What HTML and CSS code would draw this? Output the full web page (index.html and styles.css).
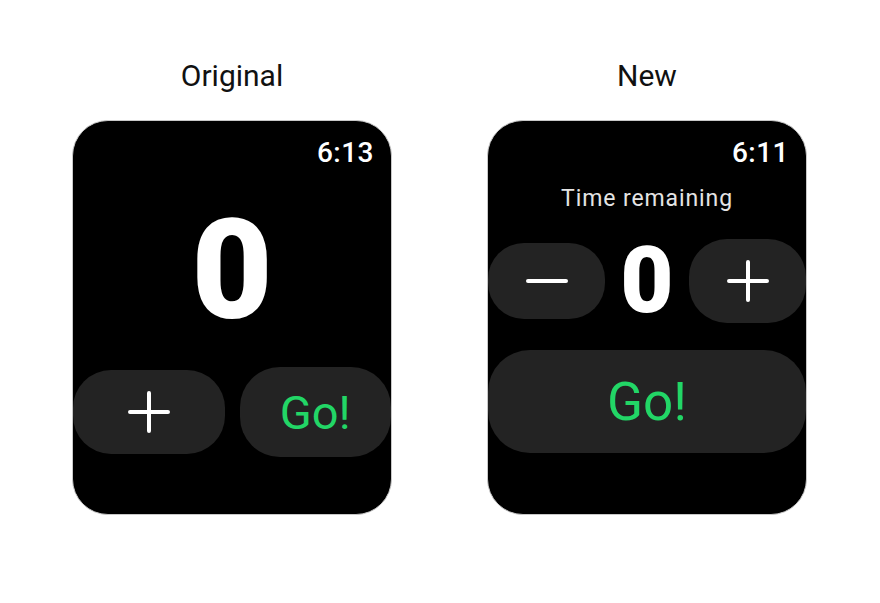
FILE: index.html
```html
<!DOCTYPE html>
<html lang="en">
<head>
<meta charset="utf-8">
<title>Watch timer comparison</title>
<link rel="stylesheet" href="styles.css">
</head>
<body>
<div class="page">
  <section class="column">
    <h2 class="title">Original</h2>
    <div class="watch">
      <div class="clock">6:13</div>
      <div class="big-count">0</div>
      <div class="button-row">
        <button class="btn btn-plus-old" aria-label="Add">
          <svg class="icon" viewBox="0 0 44 44" width="44" height="44"><path d="M22 3V41M3 22H41" stroke="#fff" stroke-width="4" stroke-linecap="round" fill="none"/></svg>
        </button>
        <button class="btn btn-go-old">Go!</button>
      </div>
    </div>
  </section>
  <section class="column">
    <h2 class="title">New</h2>
    <div class="watch">
      <div class="clock">6:11</div>
      <div class="label">Time remaining</div>
      <div class="stepper">
        <button class="btn btn-minus" aria-label="Subtract">
          <svg class="icon" viewBox="0 0 44 44" width="44" height="44"><path d="M3 22H41" stroke="#fff" stroke-width="4" stroke-linecap="round" fill="none"/></svg>
        </button>
        <div class="small-count">0</div>
        <button class="btn btn-plus" aria-label="Add">
          <svg class="icon" viewBox="0 0 44 44" width="44" height="44"><path d="M22 3V41M3 22H41" stroke="#fff" stroke-width="4" stroke-linecap="round" fill="none"/></svg>
        </button>
      </div>
      <button class="btn btn-go-new">Go!</button>
    </div>
  </section>
</div>
</body>
</html>
```
FILE: styles.css
```css
* { box-sizing: border-box; }
html, body { margin: 0; padding: 0; background: #fff; }
body { font-family: Roboto, "Liberation Sans", sans-serif; }

.page {
  display: flex;
  gap: 95px;
  padding-left: 72px;
  padding-top: 61px;
}

.column {
  width: 320px;
  display: flex;
  flex-direction: column;
}

.title {
  margin: 0;
  font-size: 30px;
  line-height: 30px;
  font-weight: 400;
  color: #111;
  text-align: center;
}

.watch {
  margin-top: 29px;
  width: 320px;
  height: 395px;
  background: #000;
  border: 1px solid #c8c8c8;
  border-radius: 36px;
  display: flex;
  flex-direction: column;
  overflow: hidden;
}

.clock {
  margin-top: 18px;
  padding-right: 17px;
  text-align: right;
  color: #fff;
  font-size: 28px;
  line-height: 28px;
  font-weight: 500;
  letter-spacing: 0.5px;
}

.big-count {
  margin-top: 33px;
  color: #fff;
  font-size: 140px;
  line-height: 140px;
  font-weight: 900;
  text-align: center;
}

.btn {
  border: 0;
  padding: 0;
  margin: 0;
  background: #232323;
  color: #fff;
  font-family: inherit;
  display: flex;
  align-items: center;
  justify-content: center;
}

.icon { display: block; }

.button-row {
  margin-top: 27px;
  display: flex;
  align-items: center;
  gap: 15px;
}

.btn-plus-old {
  width: 152px;
  height: 84px;
  border-radius: 38px;
}

.btn-go-old {
  width: 152px;
  height: 90px;
  border-radius: 40px;
  color: #22d666;
  font-size: 47px;
  font-weight: 400;
}

.label {
  margin-top: 20px;
  text-align: center;
  color: #e4e4e4;
  font-size: 23px;
  line-height: 23px;
  letter-spacing: 0.9px;
}

.stepper {
  margin-top: 29px;
  height: 84px;
  display: flex;
  align-items: center;
}

.btn-minus {
  width: 117px;
  height: 76px;
  border-radius: 36px;
}

.btn-plus {
  width: 117px;
  height: 84px;
  border-radius: 38px;
}

.small-count {
  flex: 1;
  text-align: center;
  color: #fff;
  font-size: 92px;
  line-height: 84px;
  font-weight: 900;
}

.btn-go-new {
  margin-top: 27px;
  width: 318px;
  height: 103px;
  border-radius: 42px;
  color: #22d666;
  font-size: 53px;
  font-weight: 400;
}
```
